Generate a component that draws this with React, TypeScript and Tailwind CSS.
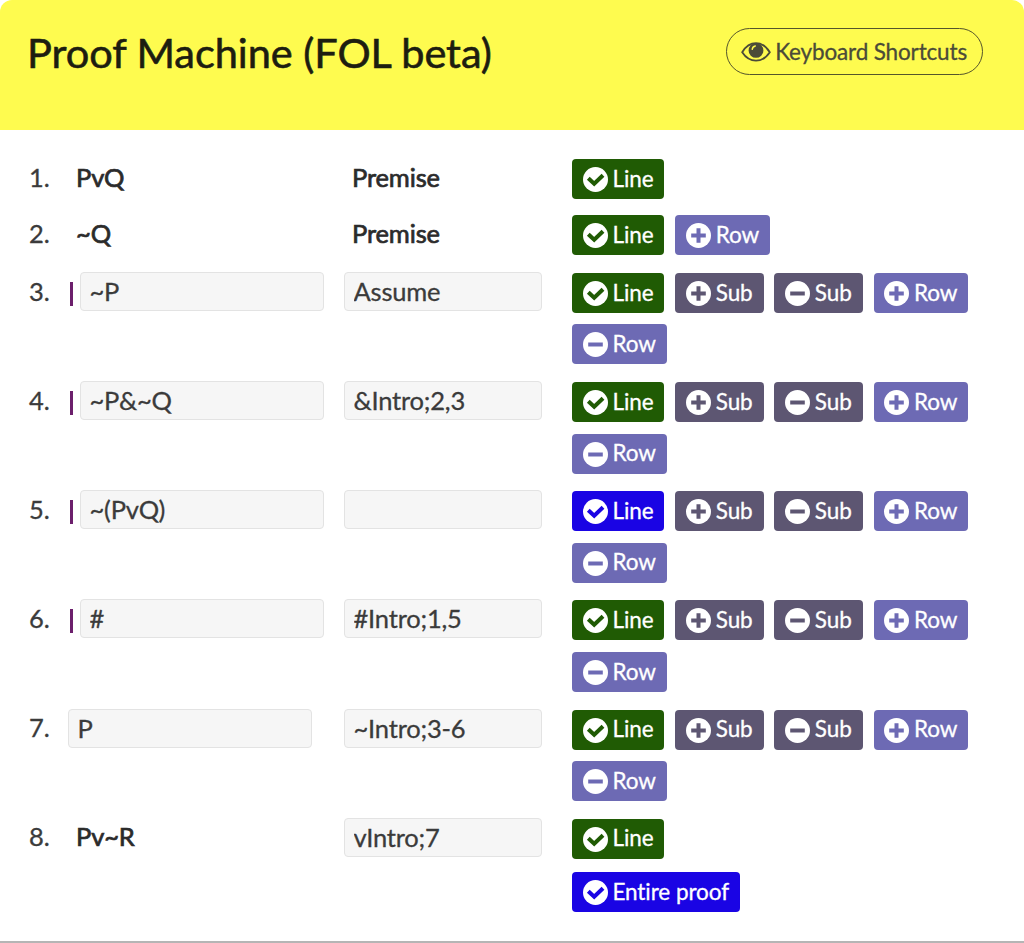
type Status = 'ok' | 'pending'

interface ProofLine {
  formula: string
  rule: string
  depth?: number
  fixedFormula?: boolean
  fixedRule?: boolean
  status: Status
  buttons: string[]
}

const ALL = ['+Sub', '-Sub', '+Row', '-Row']

const lines: ProofLine[] = [
  { formula: 'PvQ', rule: 'Premise', fixedFormula: true, fixedRule: true, status: 'ok', buttons: [] },
  { formula: '~Q', rule: 'Premise', fixedFormula: true, fixedRule: true, status: 'ok', buttons: ['+Row'] },
  { formula: '~P', rule: 'Assume', depth: 1, status: 'ok', buttons: ALL },
  { formula: '~P&~Q', rule: '&Intro;2,3', depth: 1, status: 'ok', buttons: ALL },
  { formula: '~(PvQ)', rule: '', depth: 1, status: 'pending', buttons: ALL },
  { formula: '#', rule: '#Intro;1,5', depth: 1, status: 'ok', buttons: ALL },
  { formula: 'P', rule: '~Intro;3-6', status: 'ok', buttons: ALL },
  { formula: 'Pv~R', rule: 'vIntro;7', fixedFormula: true, status: 'ok', buttons: [] },
]

const rowHeights = ['h-[56.5px]', 'h-[57.9px]', 'h-[109.1px]', 'h-[109.1px]', 'h-[109.1px]', 'h-[109.1px]', 'h-[109.1px]', 'h-[53.8px]']

const colors = {
  ok: 'bg-[#205b04]',
  pending: 'bg-[#1a04e4]',
  sub: 'bg-[#5d5672]',
  row: 'bg-[#6d6ab4]',
}

const glyphs = {
  check: 'M5.3 11.2 L11.2 16.8 L20 8.2',
  plus: 'M12.5 5.2 V19.8 M5.2 12.5 H19.8',
  minus: 'M5.2 12.5 H19.8',
}

function Sign({ kind }: { kind: keyof typeof glyphs }) {
  return (
    <svg className="w-[25px] h-[25px] shrink-0 mt-px" viewBox="0 0 25 25" fill="none" stroke="currentColor">
      <circle cx="12.5" cy="12.5" r="12.5" className="fill-white" stroke="none" />
      <path d={glyphs[kind]} strokeWidth="4" />
    </svg>
  )
}

function ActionButton({ kind, color, label }: { kind: keyof typeof glyphs; color: keyof typeof colors; label: string }) {
  const tint = {
    ok: 'text-[#205b04]',
    pending: 'text-[#1a04e4]',
    sub: 'text-[#5d5672]',
    row: 'text-[#6d6ab4]',
  }[color]
  return (
    <button className={`flex items-center h-10 px-[10.9px] rounded-[4px] text-[22.5px] leading-none tracking-[-0.06px] ${colors[color]} ${tint}`}>
      <Sign kind={kind} />
      <span className="ml-[4.5px] text-white [-webkit-text-stroke:0.3px_white]">{label}</span>
    </button>
  )
}

function Field({ value, width }: { value: string; width: string }) {
  return (
    <input
      className={`h-[39px] ${width} px-[8.5px] pb-px rounded-[4px] border-[1.5px] border-[#e3e3e3] bg-[#f6f6f6] text-[25.5px] tracking-[-0.2px] text-[#3b3b3b] [-webkit-text-stroke:0.3px_#3b3b3b] outline-none`}
      defaultValue={value}
    />
  )
}

function Row({ line, index }: { line: ProofLine; index: number }) {
  return (
    <div className={`flex items-start ${rowHeights[index]}`}>
      <div className="w-[39px] h-[37px] flex items-center [-webkit-text-stroke:0.3px_#3b3b3b]">{index + 1}.</div>
      <div className="w-[276px] h-[37px] flex items-center">
        {line.fixedFormula ? (
          <span className="ml-2 text-[#2b2b2b] [-webkit-text-stroke:0.7px_#2b2b2b]">{line.formula}</span>
        ) : (
          <>
            {line.depth && <span className="w-[2.5px] h-6 ml-[2px] mr-[7.5px] mt-1 bg-[#6c1f6c]" />}
            <Field value={line.formula} width="w-[244px]" />
          </>
        )}
      </div>
      <div className="w-[228px] h-[37px] flex items-center">
        {line.fixedRule ? (
          <span className="ml-2 text-[#2b2b2b] [-webkit-text-stroke:0.7px_#2b2b2b]">{line.rule}</span>
        ) : (
          <Field value={line.rule} width="w-[198px]" />
        )}
      </div>
      <div className="flex-1 flex flex-wrap gap-x-[10.9px] gap-y-[11.3px]">
        <ActionButton kind="check" color={line.status} label="Line" />
        {line.buttons.map((b) => (
          <ActionButton
            key={b}
            kind={b[0] === '+' ? 'plus' : 'minus'}
            color={b.endsWith('Sub') ? 'sub' : 'row'}
            label={b.slice(1)}
          />
        ))}
      </div>
    </div>
  )
}

export default function App() {
  return (
    <div className="w-[1024px] h-[943px] flex flex-col overflow-hidden bg-white border-b-2 border-[#b5b5b5] font-['Lato',sans-serif] text-[#3b3b3b]">
      <header className="h-[130px] shrink-0 flex justify-between items-start rounded-t-[12px] bg-[#fefb4f] pl-[27px] pr-[41px] pt-7">
        <h1 className="text-[41.5px] leading-[50px] -mt-px tracking-[-0.05px] text-[#1d1d10] [-webkit-text-stroke:0.6px_#1d1d10] whitespace-nowrap">
          Proof Machine (FOL beta)
        </h1>
        <button className="flex items-center h-[47px] pl-[14px] pr-[15px] rounded-full border-[1.5px] border-[#55552b] text-[22.5px] tracking-[-0.15px] text-[#4b4b38] [-webkit-text-stroke:0.3px_#4b4b38]">
          <svg className="w-[30px] h-[20px] mr-1 mt-px" viewBox="0 0 30 20" fill="none" stroke="currentColor">
            <path d="M1.2 10.2 C5 4 10 1.2 15 1.2 C20 1.2 25 4 28.8 10.2 C25 16 20 18.6 15 18.6 C10 18.6 5 16 1.2 10.2 Z" strokeWidth="1.8" />
            <circle cx="15" cy="8.4" r="7.4" fill="currentColor" stroke="none" />
            <path d="M11.2 7.4 C11.4 5.5 12.5 4.4 14.3 4" strokeWidth="1.4" className="stroke-[#fefb4f]" strokeLinecap="round" />
          </svg>
          Keyboard Shortcuts
        </button>
      </header>
      <main className="pl-[29px] pt-[28.8px] text-[25.5px] leading-none tracking-[-0.15px]">
        {lines.map((line, i) => (
          <Row key={i} line={line} index={i} />
        ))}
        <div className="pl-[543px] flex">
          <ActionButton kind="check" color="pending" label="Entire proof" />
        </div>
      </main>
    </div>
  )
}
